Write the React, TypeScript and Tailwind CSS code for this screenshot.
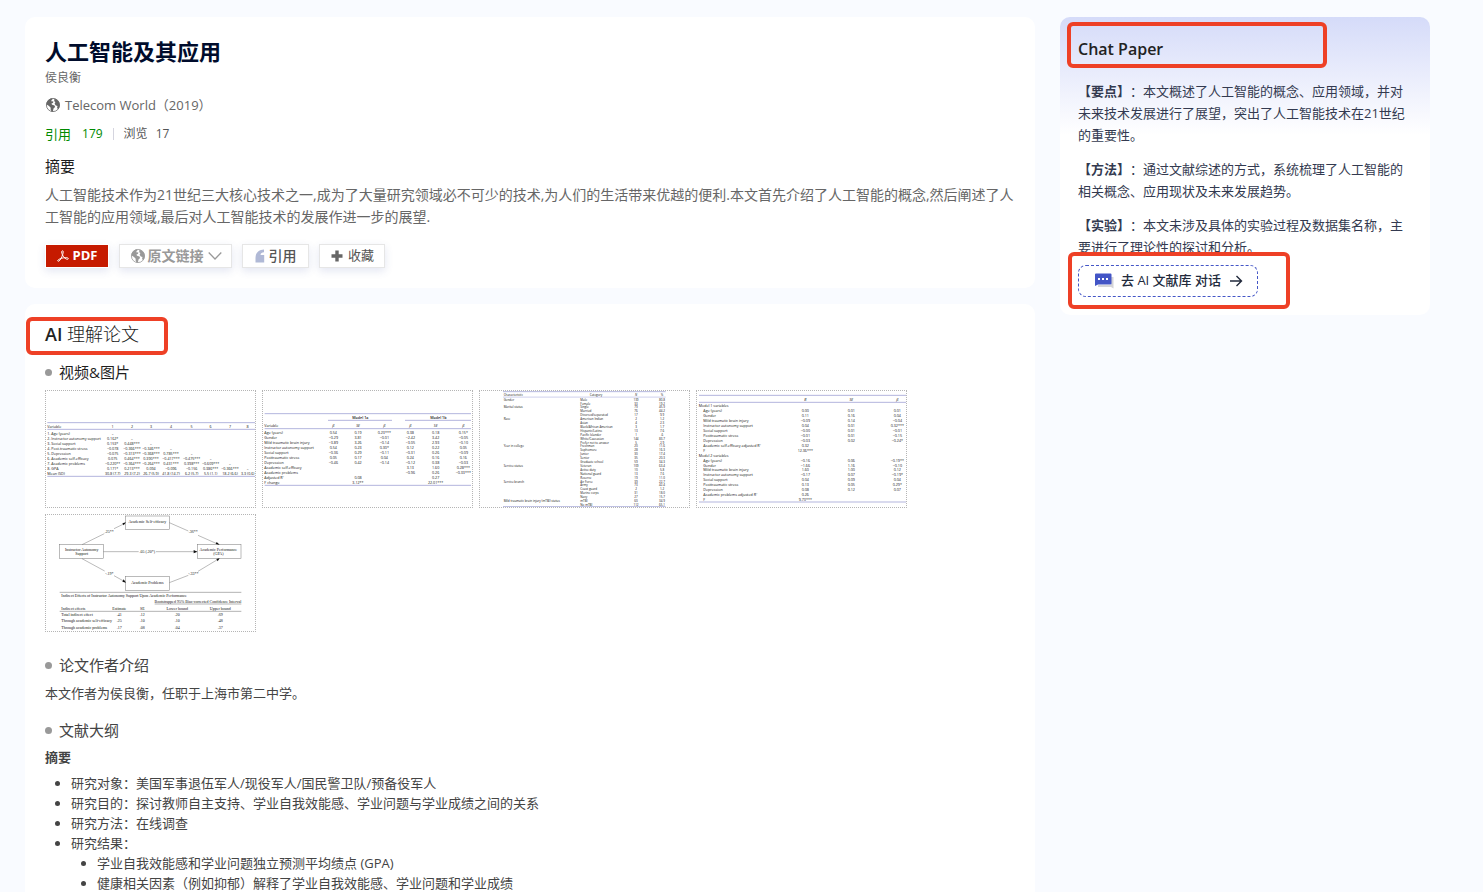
import type { ReactNode } from "react";

type Row = { label: string; indent?: boolean; cells: string[] };

const row = (label: string, ...cells: string[]): Row => ({ label, cells });
const sub = (label: string, ...cells: string[]): Row => ({ label, indent: true, cells });

const correlations = [
  row("1. Age (years)", "–"),
  row("2. Instructor autonomy support", "0.162*", "–"),
  row("3. Social support", "0.153*", "0.448***", "–"),
  row("4. Post-traumatic stress", "−0.078", "−0.366***", "−0.346***", "–"),
  row("5. Depression", "−0.075", "−0.313***", "−0.368***", "0.785***", "–"),
  row("6. Academic self-efficacy", "0.075", "0.464***", "0.390***", "−0.417***", "−0.475***", "–"),
  row("7. Academic problems", "−0.220**", "−0.364***", "−0.264***", "0.431***", "0.398***", "−0.609***", "–"),
  row("8. GPA", "0.171*", "0.213***", "0.094", "−0.096", "−0.156", "0.386***", "−0.366***", "–"),
  row("Mean (SD)", "30.8 (7.7)", "29.3 (7.2)", "26.7 (5.9)", "41.8 (14.7)", "6.2 (5.7)", "5.5 (1.1)", "18.2 (6.6)", "3.3 (0.6)"),
];

const models = [
  row("Age (years)", "0.54", "0.19", "0.23***", "0.38", "0.18", "0.15*"),
  row("Gender", "−0.29", "3.81", "−0.01", "−2.42", "3.42", "−0.05"),
  row("Mild traumatic brain injury", "−3.89", "3.26", "−0.14", "−3.05", "2.93", "−0.10"),
  row("Instructor autonomy support", "0.54", "0.23", "0.30*", "0.12", "0.22", "0.05"),
  row("Social support", "−0.36", "0.29", "−0.11", "−0.31", "0.26", "−0.09"),
  row("Posttraumatic stress", "0.05", "0.17", "0.04", "0.24", "0.16", "0.16"),
  row("Depression", "−0.46", "0.42", "−0.14", "−0.12", "0.38", "−0.03"),
  row("Academic self-efficacy", "", "", "", "3.13", "1.60", "0.28***"),
  row("Academic problems", "", "", "", "−0.96", "0.26", "−0.33***"),
  row("Adjusted R²", "", "0.08", "", "", "0.27"),
  row("F change", "", "3.12**", "", "", "22.01***"),
];

const sample = [
  row("Gender", "Male", "139", "80.8"),
  row("", "Female", "33", "19.2"),
  row("Marital status", "Single", "79", "45.9"),
  row("", "Married", "76", "44.2"),
  row("", "Divorced/separated", "17", "9.9"),
  row("Race", "American Indian", "2", "1.2"),
  row("", "Asian", "4", "2.3"),
  row("", "Black/African American", "3", "1.7"),
  row("", "Hispanic/Latino", "13", "7.6"),
  row("", "Pacific Islander", "1", ".6"),
  row("", "White/Caucasian", "144", "83.7"),
  row("", "Prefer not to answer", "5", "2.9"),
  row("Year in college", "Freshman", "20", "11.6"),
  row("", "Sophomore", "28", "16.3"),
  row("", "Junior", "30", "17.4"),
  row("", "Senior", "35", "20.3"),
  row("", "Graduate school", "59", "34.3"),
  row("Service status", "Veteran", "109", "63.4"),
  row("", "Active duty", "10", "5.8"),
  row("", "National guard", "13", "7.6"),
  row("", "Reserve", "19", "11.0"),
  row("Service branch", "Air Force", "39", "22.7"),
  row("", "Army", "73", "42.4"),
  row("", "Coast guard", "2", "1.2"),
  row("", "Marine corps", "31", "18.0"),
  row("", "Navy", "27", "15.7"),
  row("Mild traumatic brain injury (mTBI) status", "mTBI", "60", "34.9"),
  row("", "No mTBI", "112", "65.1"),
];

const regression = [
  row("Model 1 variables"),
  sub("Age (years)", "0.00", "0.01", "0.01"),
  sub("Gender", "0.11", "0.16", "0.04"),
  sub("Mild traumatic brain injury", "−0.09", "0.14", "−0.04"),
  sub("Instructor autonomy support", "0.04", "0.01", "0.32***"),
  sub("Social support", "−0.00", "0.01", "−0.01"),
  sub("Posttraumatic stress", "−0.01", "0.01", "−0.15"),
  sub("Depression", "−0.03", "0.02", "−0.24*"),
  sub("Academic self-efficacy adjusted R²", "0.32"),
  sub("F", "12.36***"),
  row("Model 2 variables"),
  sub("Age (years)", "−0.16", "0.06", "−0.19**"),
  sub("Gender", "−1.66", "1.16", "−0.10"),
  sub("Mild traumatic brain injury", "1.60", "1.00", "0.12"),
  sub("Instructor autonomy support", "−0.17", "0.07", "−0.19*"),
  sub("Social support", "0.04", "0.09", "0.04"),
  sub("Posttraumatic stress", "0.13", "0.05", "0.29*"),
  sub("Depression", "0.08", "0.12", "0.07"),
  sub("Academic problems adjusted R²", "0.26"),
  sub("F", "9.73***"),
];

type RowsProps = { rows: Row[]; x: number; y: number; step: number; columns: number[]; startFirst?: boolean };

function Rows({ rows, x, y, step, columns, startFirst }: RowsProps) {
  return (
    <>
      {rows.map((r, i) => (
        <g key={i}>
          <text x={r.indent ? x + 14 : x} y={y + i * step}>{r.label}</text>
          {r.cells.map((cell, c) => (
            <text key={c} x={columns[c]} y={y + i * step} textAnchor={startFirst && c === 0 ? "start" : "middle"}>
              {cell}
            </text>
          ))}
        </g>
      ))}
    </>
  );
}

function Thumb({ label, box, serif, children }: { label: string; box: string; serif?: boolean; children: ReactNode }) {
  return (
    <a href="#figure" aria-label={label} className="block h-[118px] w-[211px] border border-dotted border-[#b5b5b5]">
      <svg
        viewBox={box}
        className="h-full w-full"
        fill="#111"
        fontSize={serif ? "12" : "11"}
        fontFamily={serif ? "'Liberation Serif', serif" : "'Open Sans', sans-serif"}
      >
        {children}
      </svg>
    </a>
  );
}

function Rules({ lines }: { lines: number[][] }) {
  return (
    <g stroke="#a3a6d6" strokeWidth="2.5">
      {lines.map(([x1, x2, y]) => (
        <line key={`${x1}-${y}`} x1={x1} x2={x2} y1={y} y2={y} />
      ))}
    </g>
  );
}

function Figures() {
  const corr = [218, 276, 333, 393, 455, 512, 570, 623];
  const model = [226, 300, 379, 457, 533, 616];
  return (
    <div className="flex max-w-[870px] flex-wrap gap-[6px]">
      <Thumb label="Correlations" box="18 18 627 348">
        <Rules lines={[[22, 645, 113], [22, 645, 133], [22, 645, 274]]} />
        <text x="22" y="129">Variable</text>
        {corr.map((x, i) => (
          <text key={x} x={x} y="129" textAnchor="middle">{i + 1}</text>
        ))}
        <Rows rows={correlations} x={22} y={149} step={15} columns={corr} />
      </Thumb>
      <Thumb label="Models 1a and 1b" box="15 18 627 348">
        <Rules lines={[[20, 639, 86], [210, 402, 106], [441, 639, 106], [20, 639, 131], [20, 639, 301]]} />
        <text x="307" y="101" textAnchor="middle" fontWeight="600">Model 1a</text>
        <text x="541" y="101" textAnchor="middle" fontWeight="600">Model 1b</text>
        <text x="19" y="126">Variable</text>
        {["β", "SE", "β", "β", "SE", "β"].map((t, i) => (
          <text key={i} x={model[i]} y="126" textAnchor="middle" fontStyle="italic">{t}</text>
        ))}
        <Rows rows={models} x={19} y={146} step={15} columns={model} />
      </Thumb>
      <Thumb label="Sample characteristics" box="15 18 627 348">
        <g fontSize="9">
          <rect x="84" y="34" width="488" height="5" fill="#e2e3f4" />
          <Rules lines={[[84, 572, 20], [84, 572, 365]]} />
          <text x="86" y="32">Characteristic</text>
          <text x="363" y="32" textAnchor="middle">Category</text>
          <text x="483" y="32" textAnchor="middle" fontStyle="italic">N</text>
          <text x="561" y="32" textAnchor="middle">%</text>
          <Rows rows={sample} x={86} y={47} step={11.7} columns={[316, 483, 561]} startFirst />
        </g>
      </Thumb>
      <Thumb label="Regression models" box="15 18 627 348">
        <Rules lines={[[21, 642, 31], [21, 642, 52], [21, 642, 351]]} />
        <text x="340" y="47" textAnchor="middle" fontStyle="italic">B</text>
        <text x="478" y="47" textAnchor="middle" fontStyle="italic">SE</text>
        <text x="616" y="47" textAnchor="middle" fontStyle="italic">β</text>
        <Rows rows={regression} x={20} y={67} step={14.8} columns={[340, 478, 616]} />
      </Thumb>
      <Thumb label="Mediation diagram" box="18 15 627 348" serif>
        <g fill="none" stroke="#777" strokeWidth="1.5">
          <rect x="256" y="18" width="132" height="41" />
          <rect x="59" y="104" width="131" height="42" />
          <rect x="472" y="104" width="131" height="42" />
          <rect x="256" y="199" width="132" height="42" />
          <path d="M126 104 193 71M222 56 255 40M388 38 445 63M474 76 537 104M190 125H296M348 125H471M126 146 194 183M222 197 256 216M388 218 445 196M474 184 537 146" />
        </g>
        <path d="M258 37 247 40 251 46ZM539 104 527 102 530 96ZM472 125 461 120V130ZM258 218 247 215 251 208ZM539 145 529 147 533 154Z" />
        <g textAnchor="middle">
          <text x="322" y="38">Academic Self-efficacy</text>
          <text x="125" y="122">Instructor Autonomy</text>
          <text x="125" y="134">Support</text>
          <text x="535" y="122">Academic Performance</text>
          <text x="535" y="134">(GPA)</text>
          <text x="322" y="223">Academic Problems</text>
          <text x="208" y="69">.25**</text>
          <text x="460" y="70">.36**</text>
          <text x="322" y="129">.05 (.20*)</text>
          <text x="208" y="195">-.19*</text>
          <text x="460" y="195">-.33**</text>
        </g>
        <g stroke="#666" strokeWidth="1.5">
          <path d="M59 247H604M344 282H604M59 304H604" />
        </g>
        <text x="64" y="260">Indirect Effects of Instructor Autonomy Support Upon Academic Performance</text>
        <text x="474" y="278" textAnchor="middle">Bootstrapped 95% Bias-corrected Confidence Interval</text>
        <Rows
          rows={[row("Indirect effects", "Estimate", "SE", "Lower bound", "Upper bound")]}
          x={64}
          y={299}
          step={0}
          columns={[238, 307, 412, 541]}
        />
        <Rows
          rows={[
            row("Total indirect effect", ".41", ".12", ".20", ".69"),
            row("Through academic self-efficacy", ".25", ".10", ".10", ".48"),
            row("Through academic problems", ".17", ".08", ".04", ".37"),
          ]}
          x={64}
          y={318}
          step={19}
          columns={[238, 307, 412, 541]}
        />
      </Thumb>
    </div>
  );
}

function Globe({ className }: { className: string }) {
  return (
    <svg viewBox="0 0 16 16" className={className} aria-hidden="true">
      <circle cx="8" cy="8" r="6.6" fill="#fff" stroke="currentColor" strokeWidth="0.8" />
      <path
        fill="currentColor"
        d="M1.300 7.200C1.800 4.300 3.800 1.900 6.800 1.300l.8 1-1.200.9.200 1.300 1.700-.3-.2 1.600-1.800.9.900 1 2.300.7.600 1.500-1.600 1.600-.6 2.900-1.300.3-1-2.300.1-1.700-1.700-1.600ZM9.400 1.500c3 .8 5.300 3.400 5.300 6.500 0 1.700-.7 3.300-1.800 4.500l-.8-1.900.4-1.500-1.700-.7-1.200-1.700.8-1.600-1.200-.9Z"
      />
    </svg>
  );
}

function SectionTitle({ children, strong }: { children: ReactNode; strong?: boolean }) {
  return (
    <h3 className={`flex items-center gap-[7px] text-[15px] leading-6 ${strong ? "text-[#1f1f1f]" : "text-[#444]"}`}>
      <span className="size-[7px] rounded-full bg-[#999]" />
      {children}
    </h3>
  );
}

// Red frame laid over the part it points out
function Marker({ className }: { className: string }) {
  return <span aria-hidden="true" className={`pointer-events-none absolute rounded-md border-4 border-[#ee4026] ${className}`} />;
}

const toolButton =
  "flex h-6 items-center justify-center border border-[#e6e6e6] bg-white shadow-[0_3px_8px_rgba(60,80,160,0.14)]";

function PaperCard() {
  return (
    <section className="rounded-[10px] bg-white px-5 pt-[19px] pb-5">
      <h1 className="text-[22px] leading-[30px] font-bold text-[#000c2c]">人工智能及其应用</h1>
      <p className="mt-[2px] text-xs leading-5 text-[#666]">侯良衡</p>
      <p className="mt-[7px] flex items-center text-[13px] leading-5 text-[#666]">
        <Globe className="mr-1 size-4" />
        Telecom World（2019）
      </p>
      <div className="mt-[9px] flex items-center text-[13px] leading-5">
        <span className="text-[#008a00]">引用</span>
        <span className="ml-[11px] text-xs leading-5 text-[#008a00]">179</span>
        <span className="mx-[10px] h-3 w-px bg-[#d5d5df]" />
        <span className="text-xs leading-5 text-[#555]">浏览</span>
        <span className="ml-2 text-xs leading-5 text-[#555]">17</span>
      </div>
      <h2 className="mt-3 text-[15px] leading-5 text-[#1f1f1f]">摘要</h2>
      <p className="mt-2 text-sm leading-[22px] text-[#666]">
        人工智能技术作为21世纪三大核心技术之一,成为了大量研究领域必不可少的技术,为人们的生活带来优越的便利.本文首先介绍了人工智能的概念,然后阐述了人工智能的应用领域,最后对人工智能技术的发展作进一步的展望.
      </p>
      <div className="mt-4 flex gap-[10px]">
        <button className="flex h-6 w-16 items-center justify-center gap-1 border border-white bg-[#c61a00] bg-clip-padding text-[13px] font-bold text-white shadow-[0_3px_8px_rgba(60,80,160,0.14)]">
          <svg viewBox="0 0 12 12" className="size-3" fill="none" stroke="currentColor" strokeWidth="1" aria-hidden="true">
            <path d="M5.300.8c1.200-.3 1.100 1.500.4 3.700C5 6.800 3.200 10.500 1.800 11.200c-1 .4-1.600-.6-.4-1.500C3 8.600 6 7.700 8.500 7.600c2.300 0 3.200.7 2.700 1.400-.7.900-2.900-.2-4.200-1.700C5.800 6 4.700 3.600 4.700 2c0-.6.2-1 .6-1.200Z" />
          </svg>
          PDF
        </button>
        <button className={`${toolButton} w-[113px] text-sm font-bold text-[#999]`}>
          <Globe className="mr-[2px] size-4" />
          原文链接
          <svg viewBox="0 0 14 10" className="ml-1 h-[10px] w-[14px]" fill="none" stroke="currentColor" strokeWidth="1.300" aria-hidden="true">
            <path d="m.7 1.500 6.300 6.500 6.300-6.500" />
          </svg>
        </button>
        <button className={`${toolButton} w-[67px] gap-1 text-sm font-medium text-[#555]`}>
          <svg viewBox="0 0 10 14" className="h-[14px] w-[10px]" fill="#b0b9d6" aria-hidden="true">
            <path d="M9 .5C4 .8.500 3.500.5 9v4.500h8.700V6H5.500C5.700 4.300 7 3.500 9 3.300Z" />
          </svg>
          引用
        </button>
        <button className={`${toolButton} w-[66px] gap-1 text-[13px] text-[#555]`}>
          <svg viewBox="0 0 14 14" className="size-[14px]" fill="#666" aria-hidden="true">
            <path d="M5.300 1.500h3.400v3.800h3.800v3.400H8.700v3.800H5.300V8.700H1.500V5.300h3.800Z" />
          </svg>
          收藏
        </button>
      </div>
    </section>
  );
}

function UnderstandingCard() {
  return (
    <section className="mt-4 rounded-t-[10px] bg-white px-5 pt-[15px] pb-5">
      <div className="relative">
        <h2 className="text-lg leading-[30px] font-light text-[#222]">
          <span className="font-semibold">AI</span> 理解论文
        </h2>
        <Marker className="-top-[2px] -left-[19px] h-[38px] w-[142px]" />
      </div>
      <div className="mt-[11px] mb-[6px]">
        <SectionTitle strong>视频&amp;图片</SectionTitle>
      </div>
      <Figures />
      <div className="mt-[21px]">
        <SectionTitle>论文作者介绍</SectionTitle>
      </div>
      <p className="mt-[6px] text-[13px] leading-5 text-[#444]">本文作者为侯良衡，任职于上海市第二中学。</p>
      <div className="mt-[15px]">
        <SectionTitle>文献大纲</SectionTitle>
      </div>
      <div className="mt-[5px] text-[13px] leading-5 text-[#444]">
        <h4 className="font-bold">摘要</h4>
        <ul className="mt-[6px] list-disc pl-[26px]">
          <li>研究对象：美国军事退伍军人/现役军人/国民警卫队/预备役军人</li>
          <li>研究目的：探讨教师自主支持、学业自我效能感、学业问题与学业成绩之间的关系</li>
          <li>研究方法：在线调查</li>
          <li>
            研究结果：
            <ul className="list-disc pl-[26px]">
              <li>学业自我效能感和学业问题独立预测平均绩点 (GPA)</li>
              <li>健康相关因素（例如抑郁）解释了学业自我效能感、学业问题和学业成绩</li>
            </ul>
          </li>
        </ul>
      </div>
    </section>
  );
}

function ChatPaper() {
  return (
    <aside className="w-[370px] shrink-0 rounded-[10px] bg-white bg-[linear-gradient(#d5dbf9,#fff_118px)] pt-[18px] pr-5 pb-[18px] pl-[18px]">
      <div className="relative">
        <h2 className="text-base leading-7 font-semibold text-[#222]">Chat Paper</h2>
        <Marker className="-top-[13px] -left-[11px] h-[46px] w-[260px]" />
      </div>
      <div className="mt-[17px] h-[172px] space-y-3 overflow-hidden text-[13px] leading-[22px] text-[#333a50]">
        <p>
          <strong>【要点】</strong>：本文概述了人工智能的概念、应用领域，并对未来技术发展进行了展望，突出了人工智能技术在21世纪的重要性。
        </p>
        <p>
          <strong>【方法】</strong>：通过文献综述的方式，系统梳理了人工智能的相关概念、应用现状及未来发展趋势。
        </p>
        <p>
          <strong>【实验】</strong>：本文未涉及具体的实验过程及数据集名称，主要进行了理论性的探讨和分析。
        </p>
      </div>
      <div className="relative mt-[13px]">
        <a
          href="#chat"
          className="flex h-8 w-[180px] items-center rounded-lg border border-dashed border-[#4456c7] pl-[15px] text-[13px] font-medium whitespace-nowrap text-[#222a3c]"
        >
          <svg viewBox="0 0 20 16" className="mr-[7px] h-4 w-5" aria-hidden="true">
            <path d="M17 4h2.500v11.500L17 14H4v-2h13Z" fill="#d4d4d8" />
            <path d="M2 .5h14.500a1 1 0 0 1 1 1v9a1 1 0 0 1-1 1H4L1 13V1.500a1 1 0 0 1 1-1Z" fill="#4355c6" />
            <path d="M4 5h2v2H4ZM8 5h2v2H8ZM12 5h2v2h-2Z" fill="#fff" />
          </svg>
          去 AI 文献库 对话
          <svg viewBox="0 0 14 14" className="ml-2 size-[14px]" fill="none" stroke="currentColor" strokeWidth="1.400" aria-hidden="true">
            <path d="M1 7h11.500M7.500 2l5 5-5 5" />
          </svg>
        </a>
        <Marker className="-top-[13px] -left-[10px] h-[57px] w-[222px]" />
      </div>
    </aside>
  );
}

export default function App() {
  return (
    <div className="flex min-h-screen items-start gap-[25px] bg-[#f9fbff] pt-[17px] pr-[53px] pl-[25px] font-['Open_Sans','Noto_Sans_CJK_SC',sans-serif] [text-spacing-trim:space-all]">
      <main className="min-w-0 flex-1">
        <PaperCard />
        <UnderstandingCard />
      </main>
      <ChatPaper />
    </div>
  );
}
